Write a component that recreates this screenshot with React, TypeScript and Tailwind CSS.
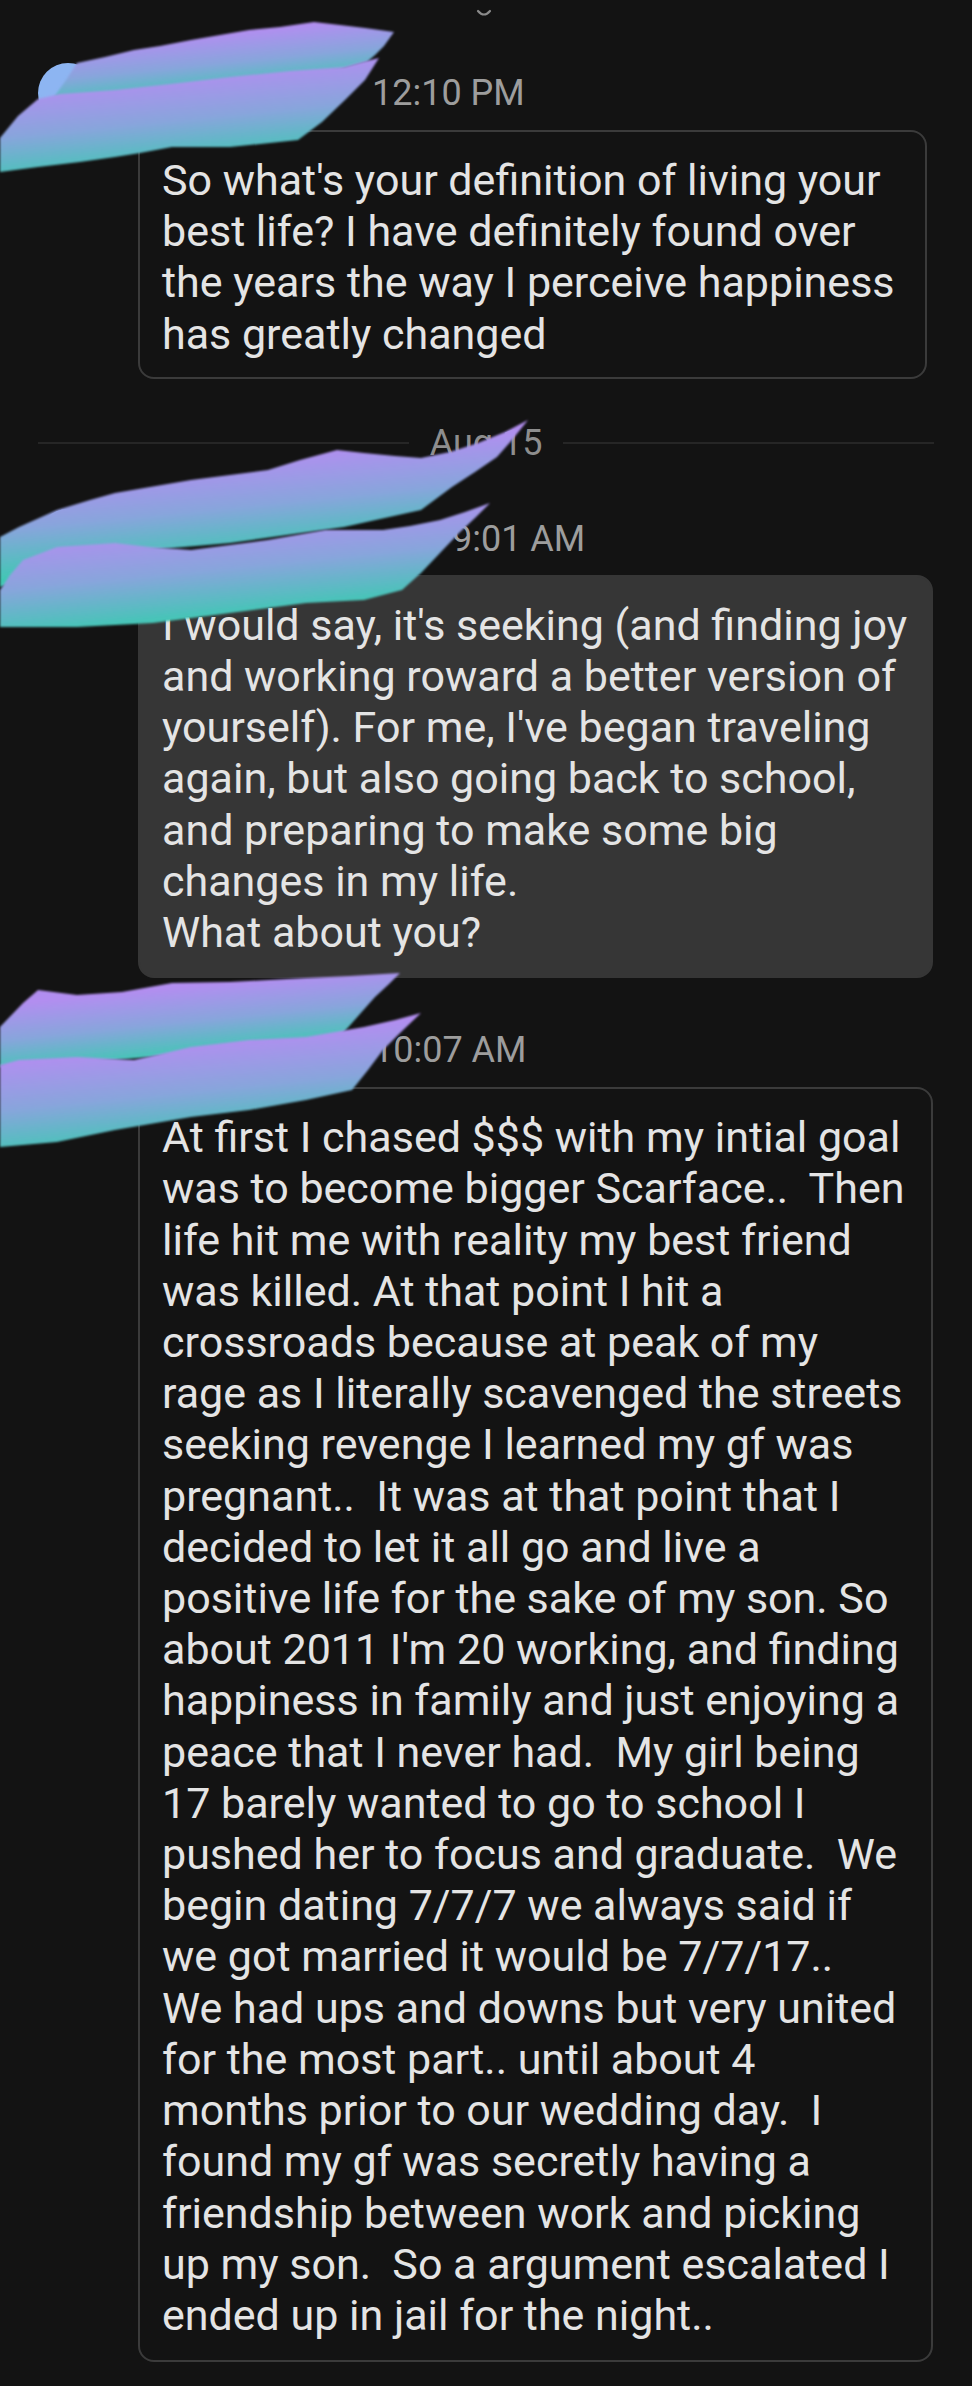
import React from "react";

const first = [
  "So what's your definition of living your",
  "best life? I have definitely found over",
  "the years the way I perceive happiness",
  "has greatly changed",
];

const second = [
  "I would say, it's seeking (and finding joy",
  "and working roward a better version of",
  "yourself). For me, I've began traveling",
  "again, but also going back to school,",
  "and preparing to make some big",
  "changes in my life.",
  "What about you?",
];

const third = [
  "At first I chased $$$ with my intial goal",
  "was to become bigger Scarface..  Then",
  "life hit me with reality my best friend",
  "was killed. At that point I hit a",
  "crossroads because at peak of my",
  "rage as I literally scavenged the streets",
  "seeking revenge I learned my gf was",
  "pregnant..  It was at that point that I",
  "decided to let it all go and live a",
  "positive life for the sake of my son. So",
  "about 2011 I'm 20 working, and finding",
  "happiness in family and just enjoying a",
  "peace that I never had.  My girl being",
  "17 barely wanted to go to school I",
  "pushed her to focus and graduate.  We",
  "begin dating 7/7/7 we always said if",
  "we got married it would be 7/7/17..",
  "We had ups and downs but very united",
  "for the most part.. until about 4",
  "months prior to our wedding day.  I",
  "found my gf was secretly having a",
  "friendship between work and picking",
  "up my son.  So a argument escalated I",
  "ended up in jail for the night..",
];

// scribbled-out names, coordinates in page pixels
const bands: { pts: string; y1: number; y2: number }[] = [
  {
    pts: "54,97 66,80 77,63 105,57 134,50 160,46 191,40 220,35 249,30 280,27 314,22 340,25 365,28 394,32 384,46 375,55 367,62 340,70 300,75 250,80 200,85 150,90 100,95",
    y1: 35,
    y2: 95,
  },
  {
    pts: "0,138 18,116 38,99 60,94 115,90 170,84 230,77 290,71 344,67 362,62 379,58 365,80 345,100 322,122 298,140 270,143 230,147 172,147 140,153 115,157 80,162 38,167 0,172",
    y1: 70,
    y2: 165,
  },
  {
    pts: "0,537 19,527 57,510 90,500 115,493 150,487 191,480 230,475 268,470 300,460 337,450 364,453 395,456 421,458 450,452 478,443 505,432 528,420 512,440 497,457 475,472 452,487 421,510 344,527 230,543 115,553 0,587",
    y1: 460,
    y2: 560,
  },
  {
    pts: "0,590 10,575 23,560 57,547 115,543 150,547 191,550 230,545 268,540 325,530 383,530 410,526 440,520 465,512 490,503 475,518 459,533 440,553 421,573 402,590 364,600 306,603 230,613 153,623 77,627 0,627",
    y1: 520,
    y2: 620,
  },
  {
    pts: "0,1027 23,1003 38,990 77,995 122,992 172,983 230,982 306,978 350,976 400,973 388,985 375,997 352,1023 337,1040 230,1050 115,1060 0,1067",
    y1: 985,
    y2: 1055,
  },
  {
    pts: "0,1065 19,1060 77,1057 134,1060 191,1047 249,1040 306,1037 364,1027 395,1020 421,1013 400,1033 383,1050 368,1070 352,1090 306,1100 249,1110 191,1117 115,1130 57,1142 0,1147",
    y1: 1040,
    y2: 1140,
  },
];

function Header({ time, gap }: { time: string; gap: string }) {
  return (
    <div className="flex items-center h-[42px]">
      <div className="ml-[38px] w-[60px] h-[60px] rounded-full bg-[#8db5f2] shrink-0" />
      <span className={`${gap} text-[36px] leading-[42px] text-[#9d9d9d]`}>{time}</span>
    </div>
  );
}

function Bubble({ lines, className }: { lines: string[]; className: string }) {
  return (
    <div
      className={`ml-[138px] rounded-[16px] border-2 pl-[22px] pt-[23px] text-[43px] leading-[51.2px] text-[#e4e4e4] ${className}`}
    >
      {lines.map((l, i) => (
        <div key={i} className="whitespace-pre">
          {l}
        </div>
      ))}
    </div>
  );
}

export default function App() {
  return (
    <div
      className="relative min-h-[2386px] bg-[#131313] overflow-hidden"
      style={{ fontFamily: "Roboto, 'Noto Sans', sans-serif" }}
    >
      <div className="h-[72px] pt-[9px] pl-[476px]">
        <svg width="16" height="10" viewBox="0 0 16 10">
          <path d="M2 2 Q8 9 14 2" stroke="#8a8a8a" strokeWidth="2.2" fill="none" strokeLinecap="round" />
        </svg>
      </div>

      <Header time="12:10 PM" gap="ml-[274px]" />
      <Bubble lines={first} className="mt-[16px] w-[789px] pb-[17px] border-[#3b3b3b] bg-[#131313]" />

      <div className="mt-[43px] mx-[38px] flex items-center gap-[21px] h-[42px]">
        <div className="flex-1 h-[2px] bg-[#262626]" />
        <span className="text-[36px] leading-[42px] text-[#8e8e8e]">Aug 15</span>
        <div className="flex-1 h-[2px] bg-[#262626]" />
      </div>

      <div className="mt-[54px]">
        <Header time="9:01 AM" gap="ml-[354px]" />
      </div>
      <Bubble lines={second} className="mt-[15px] w-[795px] pb-[18px] border-[#363636] bg-[#363636]" />

      <div className="mt-[51px]">
        <Header time="10:07 AM" gap="ml-[275px]" />
      </div>
      <Bubble lines={third} className="mt-[16px] w-[795px] pb-[19px] border-[#3b3b3b] bg-[#131313]" />

      <svg
        className="absolute left-0 top-0 pointer-events-none"
        width="972"
        height="1200"
        viewBox="0 0 972 1200"
      >
        <defs>
          <filter id="soft" x="-5%" y="-5%" width="110%" height="110%">
            <feGaussianBlur stdDeviation="0.9" />
          </filter>
          {bands.map((b, i) => (
            <linearGradient
              key={i}
              id={`g${i}`}
              gradientUnits="userSpaceOnUse"
              x1="200"
              y1={b.y1}
              x2={200 + (b.y2 - b.y1) * 0.1}
              y2={b.y2}
            >
              <stop offset="0" stopColor="#b28ef0" />
              <stop offset="0.5" stopColor="#88a5dc" />
              <stop offset="1" stopColor="#3fc8b3" />
            </linearGradient>
          ))}
        </defs>
        {bands.map((b, i) => (
          <polygon key={i} points={b.pts} fill={`url(#g${i})`} filter="url(#soft)" />
        ))}
      </svg>
    </div>
  );
}
